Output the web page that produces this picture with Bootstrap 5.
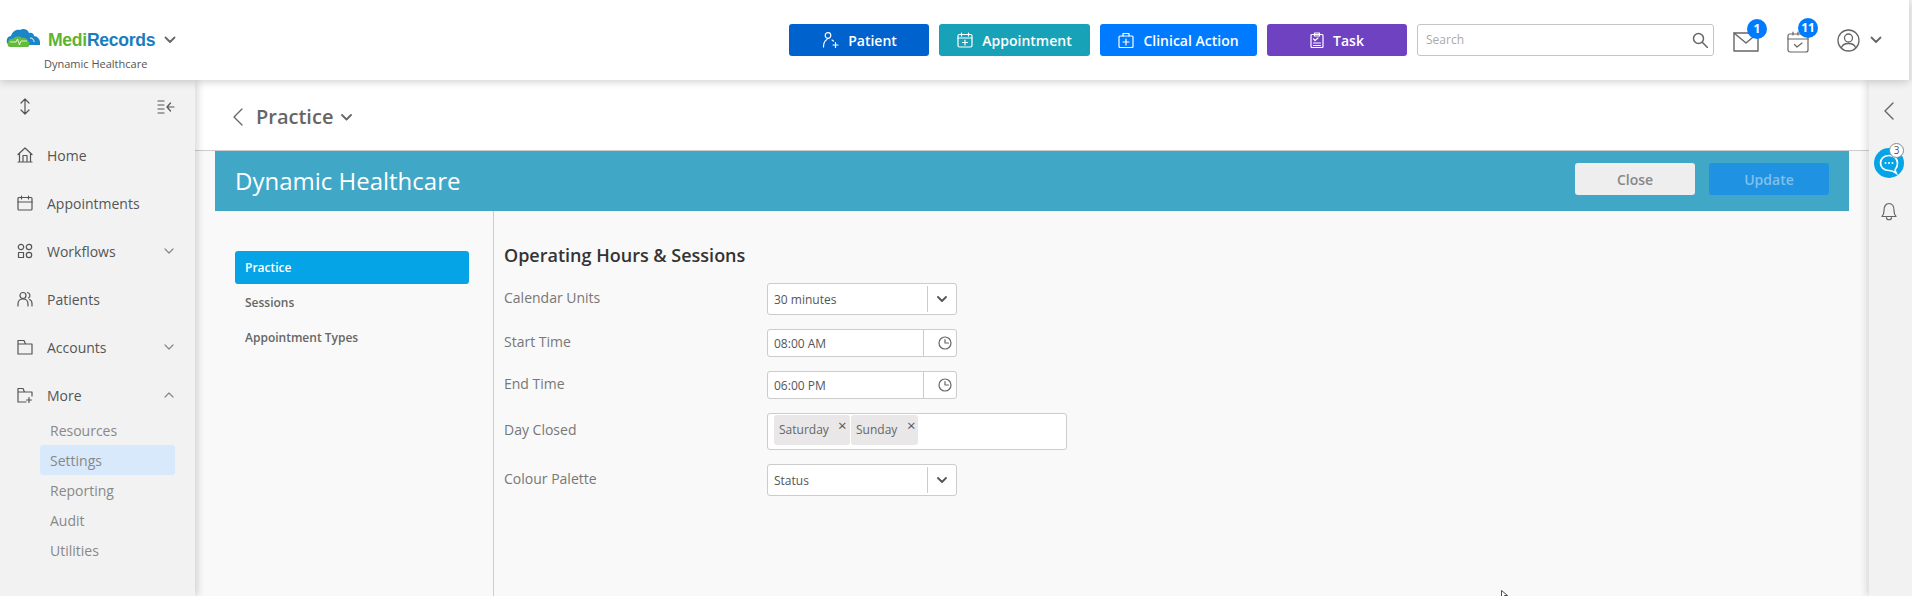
<!DOCTYPE html>
<html lang="en"><head><meta charset="utf-8"><title>Practice</title>
<link href="https://cdn.jsdelivr.net/npm/bootstrap@5.3.0/dist/css/bootstrap.min.css" rel="stylesheet">
<style>
html,body{height:596px;overflow:hidden}
body{font-family:"Open Sans",sans-serif;background:#f0f0f0;color:#555}
svg{display:block;flex:none}
.ic{fill:none;stroke:currentColor;stroke-width:1.2;stroke-linecap:round;stroke-linejoin:round}
.top-hdr{height:80px;width:1909px;background:#fff;box-shadow:0 2px 8px rgba(0,0,0,.18);position:relative;z-index:5;padding:0}
.brand-box{width:195px;height:80px;position:relative;flex:none}
.brand-line{padding:28px 0 0 6px;gap:7px;height:52px;align-items:flex-start}
.brand-word{font:700 17.6px/24px "Liberation Sans",sans-serif;letter-spacing:-.3px;color:#1b7dbd}
.brand-word b{color:#5cb531;font-weight:700}
.brand-sub{font-size:11px;line-height:14px;color:#555;padding-left:44px;margin-top:5px}
.act-row{margin-left:594px;gap:10px}
.act{height:32px;width:140px;padding:0;border:0;border-radius:3px;color:#fff;font-size:14px;font-weight:600;gap:9px}
.act:hover{color:#fff}
.w-a{width:151px;background:#17a2b8}.w-b{background:#0062cc}.w-c{width:157px;background:#007bff}.w-d{background:#6f42c1}
.srch{width:297px;height:32px;border:1px solid #c4c4c4;border-radius:3px;padding:0 5px 0 8px;color:#666}
.srch span{font-size:12px;color:#aaa}
.hdr-ic{position:relative;color:#666}
.cnt{position:absolute;background:#007bff;color:#fff;border-radius:50%;width:20px;height:20px;font-size:12px;font-weight:700;line-height:20px;text-align:center}
.shell{height:516px}
.side{width:195px;flex:none;background:#f2f2f2;box-shadow:3px 0 7px rgba(0,0,0,.15);position:relative;z-index:3;color:#555}
.side-top{height:51px;padding:2px 20px 0 17px}
.side-item{height:48px;padding:0 21px 0 17px;font-size:14px;font-weight:500;color:#555}
.side-item span{margin-left:14px}
.side-item .cv{color:#888}
.side-item.lastitem{margin-bottom:-4px}
.side-sub{height:30px;margin-left:40px;width:135px;padding-left:10px;font-size:14px;font-weight:500;color:#888;border-radius:3px}
.side-sub.on{background:#d8e9fc}
.body-main{background:#f9f9f9;min-width:0}
.crumb{height:71px;background:#fff;border-bottom:1px solid #ccc;padding:4px 0 0 37px;color:#666}
.crumb h1{font-size:20px;font-weight:600;margin:0 0 0 13px;color:#666}
.band{height:60px;margin:0 20px;background:#41a7c7;padding:0 20px 0 20px}
.band h2{font-size:24px;font-weight:400;color:#fff;margin:0}
.bbtns{margin-bottom:4px}
.bbtn{width:120px;height:32px;padding:0;border:0;border-radius:3px;font-size:14px;font-weight:600}
.bbtn.c1,.bbtn.c1:disabled{background:#eee;color:#888;opacity:1}
.bbtn.c2,.bbtn.c2:disabled{background:#1f92e2;color:#7fc1ec;margin-left:14px;opacity:1}
.work{margin:0 0 0 20px;height:385px}
.tabs-col{width:279px;flex:none;border-right:1px solid #ccc;padding:40px 24px 0 20px}
.tabit{height:33px;margin-bottom:2px;padding:0 10px;font-size:12px;font-weight:600;color:#666;border-radius:3px}
.tabit.on{background:#05a4e7;color:#fff}
.form-col{padding:33px 0 0 10px}
.form-col h3{font-size:18px;font-weight:600;color:#333;line-height:22px;margin:0 0 17px}
.frow{margin-bottom:14px}
.frow label{width:263px;font-size:14px;color:#777;padding-bottom:4px;margin:0}
.fld{width:190px;background:#fff;border:1px solid #ccc;border-radius:3px;font-size:12px;color:#555;font-weight:500;padding-left:6px;height:28px}
.fld span{padding-top:1px}
.fld.h32{height:32px}
.fld .dv{margin-left:auto;border-left:1px solid #ccc;height:100%;width:33px;color:#555}
.fld .dv.clk{padding-right:4px;color:#666}
.fld.h32 .dv{height:26px;width:29px}
.tags{width:300px;height:37px;padding:1px 0 0 6px;gap:1px;align-items:flex-start}
.tag{height:30px;background:#e9e7e7;border-radius:3px;padding:0 0 0 5px;font-size:12px;color:#666;position:relative}
.tag i{font-style:normal;font-weight:500;position:absolute;top:2px;font-size:15px;line-height:16px;color:#555}
.rail{width:43px;flex:none;background:#f2f2f2;box-shadow:-3px 0 7px rgba(0,0,0,.12);position:relative;z-index:3;color:#666}
.chatb{width:30px;height:30px;border-radius:50%;background:#05a4e7;position:relative;margin:28px 0 0 5px}
.chatn{position:absolute;top:-5px;left:15px;width:15px;height:15px;border-radius:50%;background:#fff;border:1px solid #888;font-size:10px;line-height:13px;text-align:center;color:#555}
.mouse{position:absolute;left:1501px;top:590px;z-index:9}
</style></head>
<body>
<nav class="navbar top-hdr flex-nowrap justify-content-start align-items-start">
  <div class="brand-box">
    <div class="d-flex brand-line">
      <svg width="35" height="20" viewBox="0 0 35 20"><path d="M1 15c-1-4 1-7 4-7 1-4 5-7 9-6 3-2 8-1 9 3 3-1 5 1 5 3 3 0 6 3 6 6v3H3z" fill="#1b86c7"/><path d="M4 19c-2 0-3-2-2-4 0-3 2-5 5-4 2-3 7-3 9-1 3-1 5 1 6 3 2 1 2 5 0 6z" fill="#63bb3b"/><path d="M4 14h6l1.5-3 2 6 1.500-4h6" fill="none" stroke="#fff" stroke-width=".8"/><path d="M24 10c3 0 4 2 4 4" fill="none" stroke="#fff" stroke-width=".9"/></svg>
      <div class="brand-word d-flex align-items-center"><div><b>Medi</b>Records</div></div>
      <svg class="ic mt-2" style="color:#666;stroke-width:1.800;margin-left:2px" width="12" height="8" viewBox="0 0 12 8"><path d="M1.500 1.500 6 6l4.500-4.500"/></svg>
    </div>
    <div class="brand-sub">Dynamic Healthcare</div>
  </div>
  <div class="d-flex align-items-center act-row" style="margin-top:24px">
    <button class="btn act w-b d-flex align-items-center justify-content-center"><svg class="ic" width="18" height="18" viewBox="0 0 18 18"><circle cx="7" cy="4.500" r="2.800"/><path d="M2.500 16c0-4 1.500-6.500 3.500-7.500M11 9c.7.300 1.200.800 1.500 1.200M12 14h5M14.500 11.500v5"/></svg>Patient</button>
    <button class="btn act w-a d-flex align-items-center justify-content-center"><svg class="ic" width="16" height="16" viewBox="0 0 16 16"><rect x="1" y="2.500" width="14" height="12.500" rx="1.500"/><path d="M1 6h14M4.500 1v3M11.500 1v3M8 8v5M5.500 10.500h5"/></svg>Appointment</button>
    <button class="btn act w-c d-flex align-items-center justify-content-center"><svg class="ic" width="16" height="16" viewBox="0 0 16 16"><rect x="1" y="4" width="14" height="11.500" rx="1"/><path d="M5 4V1.500h6V4M8 7v6M5 10h6"/></svg>Clinical Action</button>
    <button class="btn act w-d d-flex align-items-center justify-content-center"><svg class="ic" width="14" height="16" viewBox="0 0 14 16"><rect x="1" y="2.500" width="12" height="13" rx="1"/><path d="M4.500 1h5v3h-5zM3.500 7l1.500 1.500L8 6M3.500 11h7M3.500 13.500h7"/></svg>Task</button>
    <div class="srch bg-white d-flex align-items-center justify-content-between"><span>Search</span><svg class="ic" style="stroke-width:1.500" width="16" height="16" viewBox="0 0 16 16"><circle cx="6.500" cy="6.500" r="5"/><path d="m10.500 10.500 5 5"/></svg></div>
    <div class="hdr-ic" style="margin-left:9px;margin-top:4px"><svg class="ic" style="stroke-width:1.400" width="26" height="20" viewBox="0 0 26 20"><rect x="1" y="1" width="24" height="18"/><path d="m1 1 12 10L25 1"/></svg><div class="cnt" style="top:-13px;left:14px">1</div></div>
    <div class="hdr-ic" style="margin-left:18px;margin-top:4px"><svg class="ic" width="22" height="22" viewBox="0 0 22 22"><rect x="1" y="3" width="20" height="18" rx="2"/><path d="M1 8h20M6 1v3M11 1v3M7.500 13.500l2.500 2.500 5-4"/></svg><div class="cnt" style="top:-13px;left:11px">11</div></div>
    <div class="hdr-ic d-flex align-items-center" style="margin-left:18px"><svg class="ic" style="stroke-width:1.300" width="23" height="23" viewBox="0 0 23 23"><circle cx="11.500" cy="11.500" r="10.500"/><circle cx="11.500" cy="9" r="4"/><path d="M4.500 18.500c1-3 4-4 7-4s6 1 7 4"/></svg><svg class="ic" style="margin-left:10px;stroke-width:1.800" width="12" height="8" viewBox="0 0 12 8"><path d="M1.500 1.500 6 6l4.500-4.500"/></svg></div>
  </div>
</nav>
<div class="d-flex shell">
  <aside class="side">
    <div class="side-top d-flex align-items-center justify-content-between">
      <svg class="ic" width="14" height="17" viewBox="0 0 14 17" style="margin-left:1px"><path d="M7 1v15M3 5l4-4 4 4M3 12l4 4 4-4"/></svg>
      <svg class="ic" width="18" height="14" viewBox="0 0 18 14"><path d="M1 1h6M1 5h6M1 9h6M1 13h6M17 7H10M13.500 3 10 7l3.500 4"/></svg>
    </div>
    <div class="side-item d-flex align-items-center"><svg class="ic" width="16" height="16" viewBox="0 0 16 16"><path d="M1 7.500 8 1l7 6.500M2.500 6.500V14M13.500 6.500V14M6 14V8.500h4V14M1 15h14"/></svg><span>Home</span></div>
    <div class="side-item d-flex align-items-center"><svg class="ic" width="16" height="16" viewBox="0 0 16 16"><rect x="1" y="2.500" width="14" height="12.500" rx="1"/><path d="M1 7h14M4.500 1v3M11.500 1v3"/></svg><span>Appointments</span></div>
    <div class="side-item d-flex align-items-center"><svg class="ic" width="16" height="16" viewBox="0 0 16 16"><circle cx="4" cy="4" r="2.700"/><circle cx="12" cy="4" r="2.700"/><circle cx="12" cy="12" r="2.700"/><path d="M1.500 9.500h5v5h-5z"/></svg><span>Workflows</span><svg class="ic cv ms-auto" width="10" height="6" viewBox="0 0 10 6"><path d="m1 1 4 4 4-4"/></svg></div>
    <div class="side-item d-flex align-items-center"><svg class="ic" width="16" height="16" viewBox="0 0 16 16"><circle cx="6" cy="4.500" r="3"/><path d="M1 15v-2c0-3 2-5 5-5s5 2 5 5v2M10.500 1.500a3 3 0 0 1 1 5.500M12.500 8.500c1.500.7 2.500 2 2.500 4V15"/></svg><span>Patients</span></div>
    <div class="side-item d-flex align-items-center"><svg class="ic" width="16" height="16" viewBox="0 0 16 16"><path d="M1 15V1.500h6L8.500 5H15v10zM1 5h7.500"/></svg><span>Accounts</span><svg class="ic cv ms-auto" width="10" height="6" viewBox="0 0 10 6"><path d="m1 1 4 4 4-4"/></svg></div>
    <div class="side-item lastitem d-flex align-items-center"><svg class="ic" width="16" height="16" viewBox="0 0 16 16"><path d="M9 15H1V1.500h5L7.500 5H15v4M1 5h6.500M12 10.500v5M9.500 13h5"/></svg><span>More</span><svg class="ic cv ms-auto" width="10" height="6" viewBox="0 0 10 6"><path d="m1 5 4-4 4 4"/></svg></div>
    <div class="side-sub d-flex align-items-center">Resources</div>
    <div class="side-sub on d-flex align-items-center">Settings</div>
    <div class="side-sub d-flex align-items-center">Reporting</div>
    <div class="side-sub d-flex align-items-center">Audit</div>
    <div class="side-sub d-flex align-items-center">Utilities</div>
  </aside>
  <main class="flex-grow-1 body-main">
    <div class="crumb d-flex align-items-center">
      <svg class="ic" style="stroke-width:1.300" width="11" height="18" viewBox="0 0 11 18"><path d="M10 1 2 9l8 8"/></svg>
      <h1>Practice</h1>
      <svg class="ic ms-2" style="stroke-width:1.800" width="11" height="7" viewBox="0 0 11 7"><path d="M1 1l4.500 4.500L10 1"/></svg>
    </div>
    <div class="band d-flex align-items-center">
      <h2>Dynamic Healthcare</h2>
      <div class="ms-auto d-flex bbtns">
        <button class="btn bbtn c1" disabled>Close</button>
        <button class="btn bbtn c2" disabled>Update</button>
      </div>
    </div>
    <div class="work d-flex">
      <div class="tabs-col">
        <div class="tabit on d-flex align-items-center">Practice</div>
        <div class="tabit d-flex align-items-center">Sessions</div>
        <div class="tabit d-flex align-items-center">Appointment Types</div>
      </div>
      <div class="form-col flex-grow-1">
        <h3>Operating Hours &amp; Sessions</h3>
        <div class="frow d-flex align-items-center"><label>Calendar Units</label><div class="fld h32 d-flex align-items-center"><span>30 minutes</span><div class="dv d-flex align-items-center justify-content-center"><svg class="ic" style="stroke-width:1.800" width="10" height="7" viewBox="0 0 10 7"><path d="M1 1l4 4 4-4"/></svg></div></div></div>
        <div class="frow d-flex align-items-center"><label>Start Time</label><div class="fld d-flex align-items-center"><span>08:00 AM</span><div class="dv clk d-flex align-items-center justify-content-end"><svg class="ic" width="14" height="14" viewBox="0 0 14 14"><circle cx="7" cy="7" r="6"/><path d="M7 3.500V7h3.500"/></svg></div></div></div>
        <div class="frow d-flex align-items-center"><label>End Time</label><div class="fld d-flex align-items-center"><span>06:00 PM</span><div class="dv clk d-flex align-items-center justify-content-end"><svg class="ic" width="14" height="14" viewBox="0 0 14 14"><circle cx="7" cy="7" r="6"/><path d="M7 3.500V7h3.500"/></svg></div></div></div>
        <div class="frow d-flex align-items-center"><label>Day Closed</label><div class="fld tags d-flex"><div class="tag d-flex align-items-center" style="width:76px">Saturday<i style="left:64px">×</i></div><div class="tag d-flex align-items-center" style="width:67px">Sunday<i style="left:56px">×</i></div></div></div>
        <div class="frow d-flex align-items-center"><label>Colour Palette</label><div class="fld h32 d-flex align-items-center"><span>Status</span><div class="dv d-flex align-items-center justify-content-center"><svg class="ic" style="stroke-width:1.800" width="10" height="7" viewBox="0 0 10 7"><path d="M1 1l4 4 4-4"/></svg></div></div></div>
      </div>
    </div>
  </main>
  <aside class="rail">
    <svg class="ic" style="margin:22px 0 0 14px;stroke-width:1.400" width="11" height="18" viewBox="0 0 11 18"><path d="M10 1 2 9l8 8"/></svg>
    <div class="chatb"><svg style="padding:6px 5px 0" width="30" height="27" viewBox="0 0 20 21"><path d="M10 1.500c-5 0-8.500 3-8.500 7.500s3.500 7.500 8.500 7.500c2 0 4 .5 7 2.500-1-2-1-3-.5-4 1.500-1.500 2-3.500 2-6C18.500 4.500 15 1.500 10 1.500z" fill="none" stroke="#fff" stroke-width="1.700"/><circle cx="6.500" cy="9" r="1" fill="#fff"/><circle cx="10" cy="9" r="1" fill="#fff"/><circle cx="13.500" cy="9" r="1" fill="#fff"/></svg><div class="chatn">3</div></div>
    <svg class="ic" style="margin:24px 0 0 12px" width="16" height="19" viewBox="0 0 16 19"><path d="M1 14.500c1.500-1.500 2-2.500 2-6C3 4 5 1.500 8 1.500s5 2.500 5 7c0 3.500.5 4.500 2 6zM5.500 15.500c0 3 5 3 5 0"/></svg>
  </aside>
</div>
<svg class="mouse" width="9" height="6" viewBox="0 0 9 6"><path d="M.5.500v8l2-2 2 3 1-1-2-3h3z" fill="#fff" stroke="#222" stroke-width=".8"/></svg>
</body></html>
